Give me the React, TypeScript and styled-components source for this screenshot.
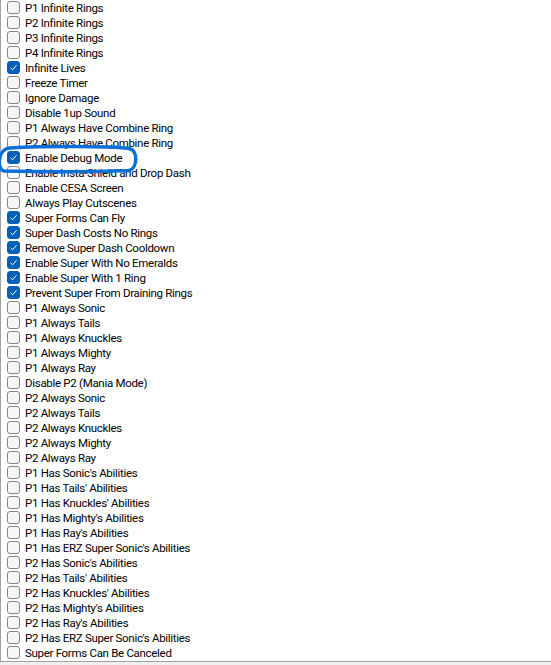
import * as React from "react";
import styled, { createGlobalStyle } from "styled-components";

const GlobalStyle = createGlobalStyle`
  html, body {
    margin: 0;
    padding: 0;
    background: #f0f0f0;
  }
`;

const Page = styled.div`
  width: 551px;
  height: 665px;
  background: #f0f0f0;
  position: relative;
  overflow: hidden;
`;

const List = styled.div`
  display: flex;
  flex-direction: column;
  background: #ffffff;
  border-left: 1px solid #a0a0a0;
  border-bottom: 1px solid #a0a0a0;
  height: 662px;
  box-sizing: border-box;
`;

const Row = styled.label`
  display: flex;
  align-items: center;
  height: 15px;
  padding-left: 6px;
  gap: 5px;
  font-family: Roboto, "Liberation Sans", Arial, sans-serif;
  font-size: 11.5px;
  letter-spacing: -0.3px;
  color: #000000;
  white-space: nowrap;
`;

const Box = styled.span<{ $checked: boolean }>`
  width: 13px;
  height: 13px;
  box-sizing: border-box;
  border-radius: 3px;
  flex: none;
  display: flex;
  align-items: center;
  justify-content: center;
  border: 1px solid ${(p) => (p.$checked ? "#005fb8" : "#858585")};
  background: ${(p) => (p.$checked ? "#005fb8" : "#f7f7f7")};
`;

const Label = styled.span`
  line-height: 15px;
  padding-top: 1px;
`;

const Marker = styled.svg`
  position: absolute;
  left: 0;
  top: 0;
  pointer-events: none;
`;

const items: [string, boolean][] = [
  ["P1 Infinite Rings", false],
  ["P2 Infinite Rings", false],
  ["P3 Infinite Rings", false],
  ["P4 Infinite Rings", false],
  ["Infinite Lives", true],
  ["Freeze Timer", false],
  ["Ignore Damage", false],
  ["Disable 1up Sound", false],
  ["P1 Always Have Combine Ring", false],
  ["P2 Always Have Combine Ring", false],
  ["Enable Debug Mode", true],
  ["Enable Insta-Shield and Drop Dash", false],
  ["Enable CESA Screen", false],
  ["Always Play Cutscenes", false],
  ["Super Forms Can Fly", true],
  ["Super Dash Costs No Rings", true],
  ["Remove Super Dash Cooldown", true],
  ["Enable Super With No Emeralds", true],
  ["Enable Super With 1 Ring", true],
  ["Prevent Super From Draining Rings", true],
  ["P1 Always Sonic", false],
  ["P1 Always Tails", false],
  ["P1 Always Knuckles", false],
  ["P1 Always Mighty", false],
  ["P1 Always Ray", false],
  ["Disable P2 (Mania Mode)", false],
  ["P2 Always Sonic", false],
  ["P2 Always Tails", false],
  ["P2 Always Knuckles", false],
  ["P2 Always Mighty", false],
  ["P2 Always Ray", false],
  ["P1 Has Sonic's Abilities", false],
  ["P1 Has Tails' Abilities", false],
  ["P1 Has Knuckles' Abilities", false],
  ["P1 Has Mighty's Abilities", false],
  ["P1 Has Ray's Abilities", false],
  ["P1 Has ERZ Super Sonic's Abilities", false],
  ["P2 Has Sonic's Abilities", false],
  ["P2 Has Tails' Abilities", false],
  ["P2 Has Knuckles' Abilities", false],
  ["P2 Has Mighty's Abilities", false],
  ["P2 Has Ray's Abilities", false],
  ["P2 Has ERZ Super Sonic's Abilities", false],
  ["Super Forms Can Be Canceled", false],
];

const Check = () => (
  <svg width="9" height="9" viewBox="0 0 9 9">
    <path d="M1.5 4.8 L3.6 6.8 L7.6 2.2" fill="none" stroke="#ffffff" strokeWidth="1" />
  </svg>
);

const App = () => {
  return (
    <Page>
      <GlobalStyle />
      <List>
        {items.map(([text, checked]) => (
          <Row key={text}>
            <Box $checked={checked}>{checked && <Check />}</Box>
            <Label>{text}</Label>
          </Row>
        ))}
      </List>
      {/* hand drawn highlight round "Enable Debug Mode" */}
      <Marker width="551" height="665">
        <path
          d="M10 148 C45 146 105 146 129 148.5 C138 150 138 168 129 170.5 C90 172 40 172 4 171 C-3 170 -3 149 10 148 Z"
          fill="none"
          stroke="#0a6fd8"
          strokeWidth="3.5"
          strokeLinejoin="round"
        />
      </Marker>
    </Page>
  );
};

export default App;
